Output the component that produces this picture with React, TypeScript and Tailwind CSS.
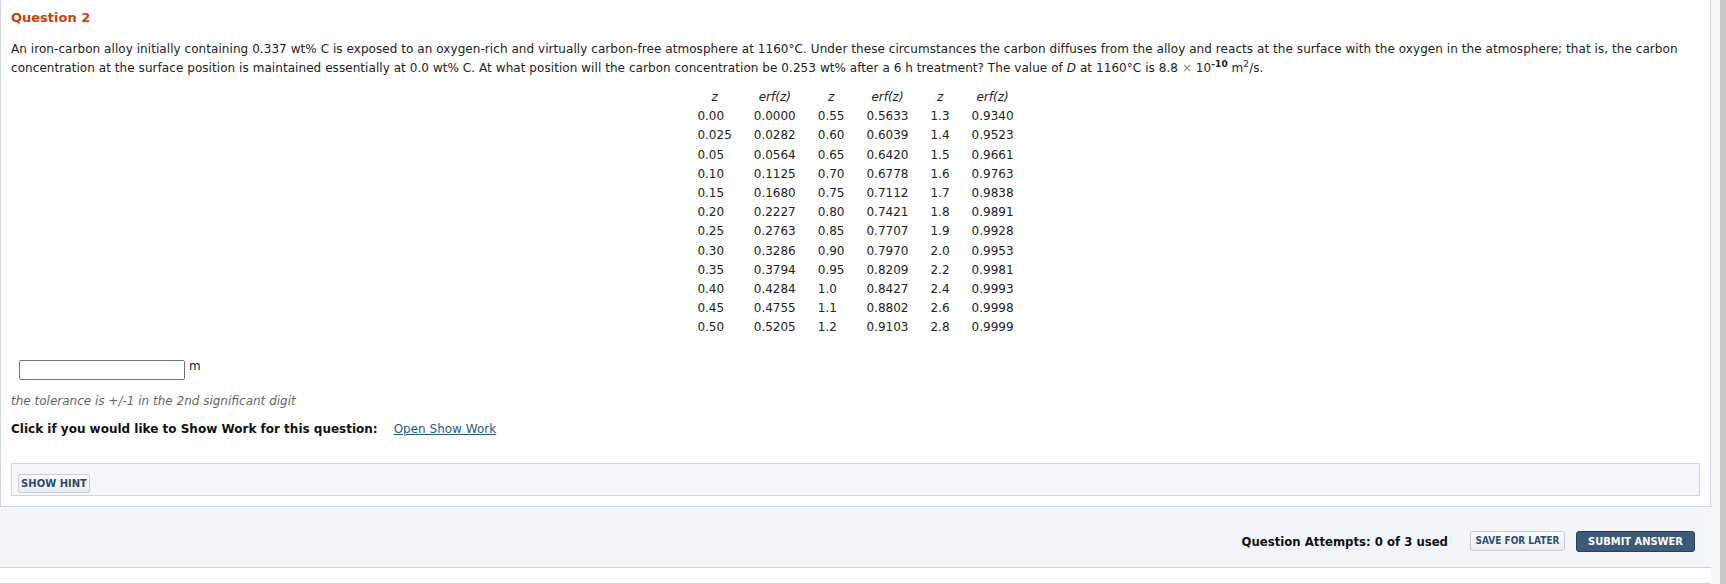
import React from 'react';

const rows: [string, string, string, string, string, string][] = [
  ['0.00', '0.0000', '0.55', '0.5633', '1.3', '0.9340'],
  ['0.025', '0.0282', '0.60', '0.6039', '1.4', '0.9523'],
  ['0.05', '0.0564', '0.65', '0.6420', '1.5', '0.9661'],
  ['0.10', '0.1125', '0.70', '0.6778', '1.6', '0.9763'],
  ['0.15', '0.1680', '0.75', '0.7112', '1.7', '0.9838'],
  ['0.20', '0.2227', '0.80', '0.7421', '1.8', '0.9891'],
  ['0.25', '0.2763', '0.85', '0.7707', '1.9', '0.9928'],
  ['0.30', '0.3286', '0.90', '0.7970', '2.0', '0.9953'],
  ['0.35', '0.3794', '0.95', '0.8209', '2.2', '0.9981'],
  ['0.40', '0.4284', '1.0', '0.8427', '2.4', '0.9993'],
  ['0.45', '0.4755', '1.1', '0.8802', '2.6', '0.9998'],
  ['0.50', '0.5205', '1.2', '0.9103', '2.8', '0.9999'],
];

const headers = ['z', 'erf(z)', 'z', 'erf(z)', 'z', 'erf(z)'];

function ErfTable() {
  return (
    <table className="mx-auto mt-[11px] border-collapse text-[12px] leading-[19.2px] text-[#222]">
      <thead>
        <tr>
          {headers.map((h, i) => (
            <th key={i} className="px-[11px] text-center font-normal italic">
              {h}
            </th>
          ))}
        </tr>
      </thead>
      <tbody>
        {rows.map((r) => (
          <tr key={r[0]}>
            {r.map((c, i) => (
              <td key={i} className="px-[11px] text-left">
                {c}
              </td>
            ))}
          </tr>
        ))}
      </tbody>
    </table>
  );
}

export default function App() {
  return (
    <div
      className="flex h-[584px] w-full overflow-hidden bg-[#f3f6f9]"
      style={{ fontFamily: '"DejaVu Sans", Verdana, sans-serif' }}
    >
      <div className="flex w-[1711px] shrink-0 flex-col">
        {/* carta da questão */}
        <div className="border-x border-b border-[#cdd5de] bg-white px-[10px] pb-[10px]">
          <h2 className="pt-[9px] text-[13px] font-bold leading-[18px] text-[#c8410b]">
            Question 2
          </h2>
          <p className="mt-[13px] text-[12px] leading-[18.5px] tracking-[0.06px] text-[#222]">
            An iron-carbon alloy initially containing 0.337 wt% C is exposed to an oxygen-rich and virtually
            carbon-free atmosphere at 1160°C. Under these circumstances the carbon diffuses from the alloy and
            reacts at the surface with the oxygen in the atmosphere; that is, the carbon concentration at the
            surface position is maintained essentially at 0.0 wt% C. At what position will the carbon concentration
            be 0.253 wt% after a 6 h treatment? The value of <i>D</i> at 1160°C is 8.8{' '}
            <span className="text-[#888]">×</span> 10
            <sup className="text-[9px] font-bold leading-none">-10</sup> m
            <sup className="text-[9px] leading-none">2</sup>/s.
          </p>

          <ErfTable />

          <div className="mt-[22px] flex items-start pl-[8px]">
            <input
              type="text"
              className="h-[20px] w-[166px] rounded-[2px] border border-[#767676] bg-white"
            />
            <span className="ml-[4px] text-[12px] leading-[12px] text-[#222]">m</span>
          </div>

          <p className="mt-[12px] text-[12px] italic leading-[18px] text-[#666]">
            the tolerance is +/-1 in the 2nd significant digit
          </p>

          <p className="mt-[10px] text-[12px] leading-[18px] text-[#111]">
            <span className="font-bold">Click if you would like to Show Work for this question:</span>
            <a href="#" className="ml-[16px] text-[#1f5a8c] underline">
              Open Show Work
            </a>
          </p>

          <div className="mt-[25px] h-[33px] border border-[#cdd5df] bg-[#f5f8fb] pl-[6px] pt-[6px]">
            <button
              type="button"
              className="h-[19px] w-[72px] rounded-[3px] border border-[#c4ccd6] bg-gradient-to-b from-white to-[#eaeef3] text-[10px] font-bold leading-[17px] text-[#2e4a6e]"
            >
              SHOW HINT
            </button>
          </div>
        </div>

        {/* rodapé com tentativas */}
        <div className="flex h-[61px] shrink-0 items-start justify-end border-b border-[#cfd6df] pr-[16px] pt-[24px]">
          <span
            className="mt-[2px] text-[13px] font-bold leading-[18px] text-[#111]"
            style={{ fontFamily: '"DejaVu Sans Condensed", Tahoma, sans-serif' }}
          >
            Question Attempts: 0 of 3 used
          </span>
          <button
            type="button"
            className="ml-[22px] h-[20px] w-[95px] rounded-[3px] border border-[#c4ccd6] bg-gradient-to-b from-white to-[#eaeef3] text-[10px] font-bold leading-[18px] text-[#2c4e7a]"
            style={{ fontFamily: '"DejaVu Sans Condensed", Tahoma, sans-serif' }}
          >
            SAVE FOR LATER
          </button>
          <button
            type="button"
            className="ml-[11px] h-[21px] w-[119px] rounded-[3px] border border-[#2c4055] bg-[#3d5a78] text-[11px] font-bold leading-[19px] text-white"
            style={{ fontFamily: '"DejaVu Sans Condensed", Tahoma, sans-serif' }}
          >
            SUBMIT ANSWER
          </button>
        </div>
        <div className="h-[16px] shrink-0 border-b border-[#cfd6df] bg-white" />
      </div>
      <div className="w-[9px] shrink-0 bg-[#f5f7f9]" />
      <div className="w-[6px] shrink-0 bg-[#c8c8c8]" />
    </div>
  );
}
